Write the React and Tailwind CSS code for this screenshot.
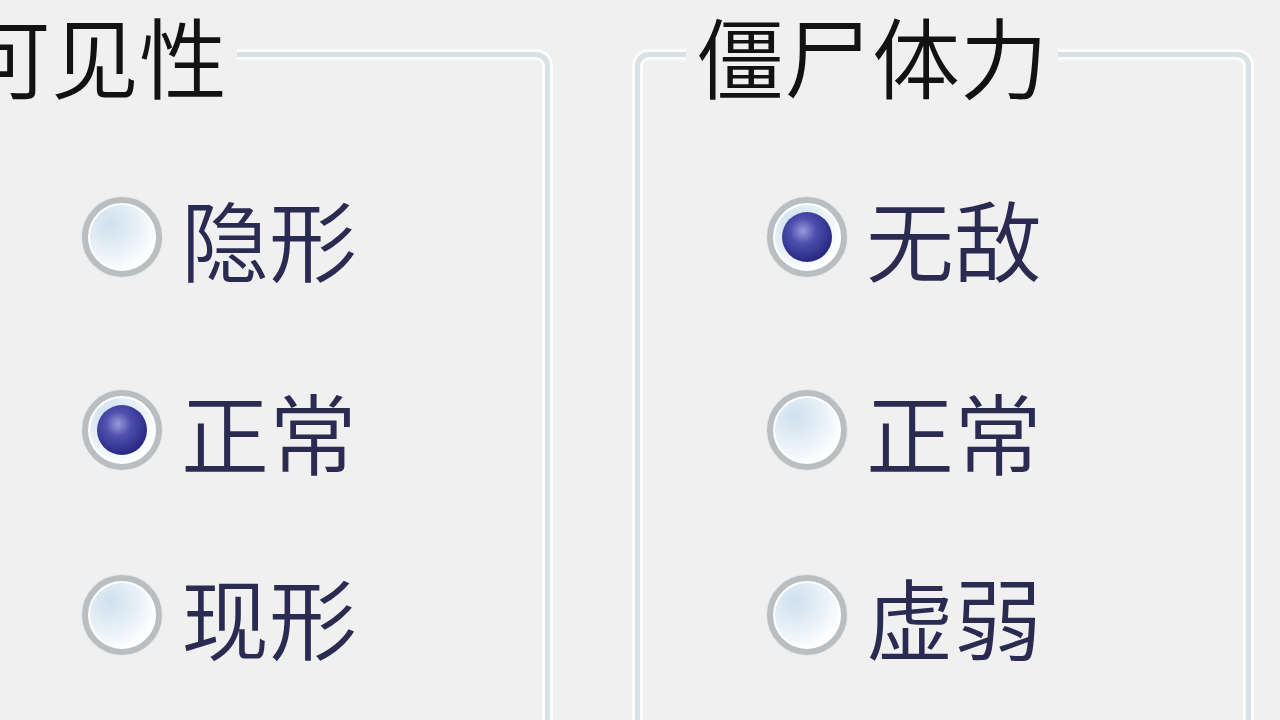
import React from "react";

function Radio({ checked }) {
  return (
    <div className="w-[80px] h-[80px] shrink-0 rounded-full border-[6px] border-[#babec1] bg-[radial-gradient(circle_at_32%_30%,#cfe0ee_0%,#e6eff6_40%,#ffffff_75%)] shadow-[inset_0_0_0_2px_#ffffff,0_0_2px_#d8dadc] flex items-center justify-center">
      {checked && (
        <div className="w-[50px] h-[50px] rounded-full bg-[radial-gradient(circle_at_42%_38%,#9a9ad8_0%,#4f4fae_30%,#2a2a86_70%,#1d1d62_100%)]" />
      )}
    </div>
  );
}

function Row({ label, checked, mt }) {
  return (
    <div className={`flex items-center h-[88px] gap-[19px] ${mt}`}>
      <Radio checked={checked} />
      <span className="text-[88px] leading-none font-[350] text-[#2b2b52] whitespace-nowrap">{label}</span>
    </div>
  );
}

export default function App() {
  return (
    <div className="w-[1280px] h-[720px] overflow-hidden bg-[#f0f0f0] flex items-start font-['Noto_Sans_CJK_SC','Noto_Sans',sans-serif]">
      <fieldset className="shrink-0 w-[750px] ml-[-200px] mt-[10px] h-[800px] border-[5px] border-[#d9e1e5] rounded-[14px] shadow-[0_0_0_3px_#fbfcfc,inset_0_0_0_3px_#fbfcfc]">
        <legend className="ml-[148px] px-[10px] bg-[#f0f0f0] text-[88px] leading-none font-[350] text-[#121212] whitespace-nowrap">
          可见性
        </legend>
        <div className="flex flex-col pl-[277px]">
          <Row label="隐形" mt="mt-[95px]" />
          <Row label="正常" checked mt="mt-[105px]" />
          <Row label="现形" mt="mt-[97px]" />
        </div>
      </fieldset>
      <fieldset className="shrink-0 w-[616px] ml-[85px] mt-[10px] h-[800px] border-[5px] border-[#d9e1e5] rounded-[14px] shadow-[0_0_0_3px_#fbfcfc,inset_0_0_0_3px_#fbfcfc]">
        <legend className="ml-[46px] px-[10px] bg-[#f0f0f0] text-[88px] leading-none font-[350] text-[#121212] whitespace-nowrap">
          僵尸体力
        </legend>
        <div className="flex flex-col pl-[127px]">
          <Row label="无敌" checked mt="mt-[95px]" />
          <Row label="正常" mt="mt-[105px]" />
          <Row label="虚弱" mt="mt-[97px]" />
        </div>
      </fieldset>
    </div>
  );
}
